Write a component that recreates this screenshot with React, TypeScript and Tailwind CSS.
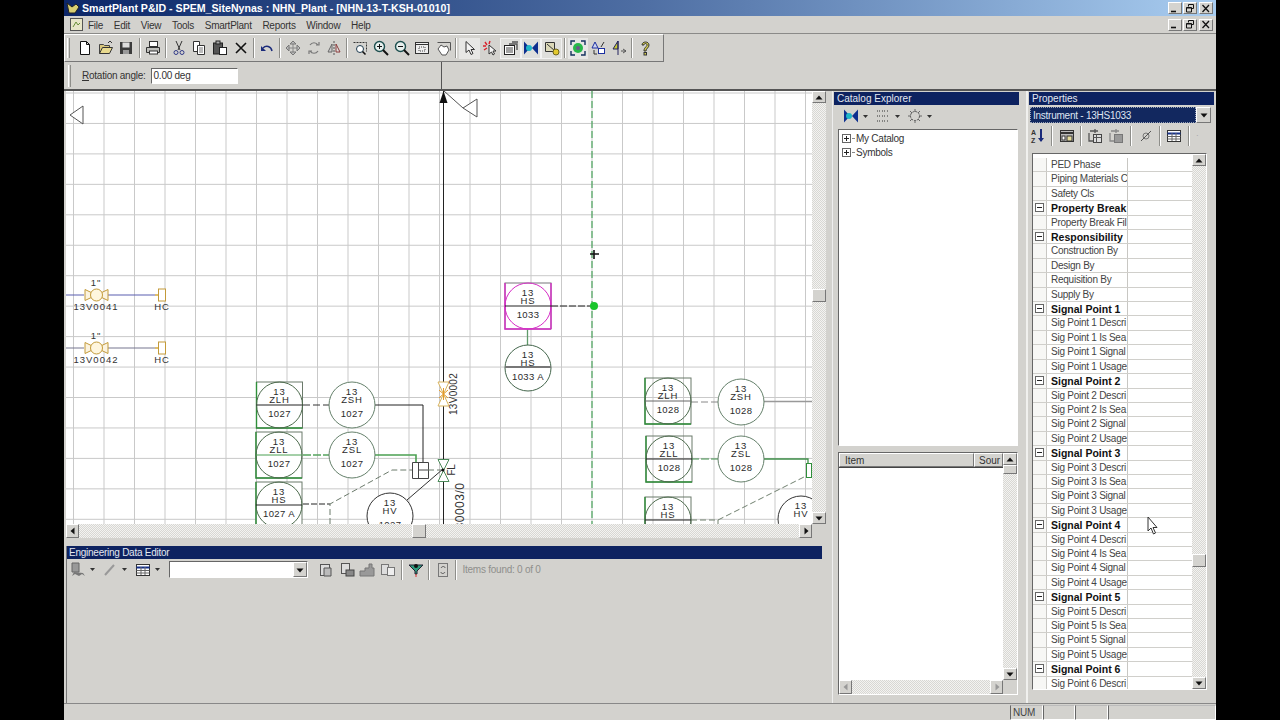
import type { ReactNode } from 'react';

const raised = 'border border-t-white border-l-white border-r-[#777] border-b-[#777] bg-[#d4d3cf]';
const sunken = 'border border-t-[#666] border-l-[#666] border-r-white border-b-white';
const track = 'bg-[repeating-conic-gradient(#d8d7d3_0_25%,#f3f3f1_0_50%)] bg-[length:2px_2px]';

const Ico = ({ children, w = 16 }: { children: ReactNode; w?: number }) => (
  <svg width={w} height="16" viewBox={`0 0 ${w} 16`} fill="none" strokeWidth="1">
    {children}
  </svg>
);

const icons: Record<string, ReactNode> = {
  newDoc: <path d="M3.5 1.5h6l3 3v10h-9z M9.5 1.5v3h3" stroke="#111" fill="#fff" />,
  open: <><path d="M1.5 13.5v-9h4l1 1h5v2" stroke="#444" fill="#d9c77c" /><path d="M1.5 13.5l3-6h10l-3 6z" stroke="#333" fill="#e8d98e" /><path d="M10 3l2-2 2 2" stroke="#333" /></>,
  save: <><rect x="2" y="2" width="12" height="12" fill="#3c3c3c" /><rect x="4.5" y="2.5" width="7" height="5" fill="#ddd" /><rect x="5" y="10" width="6" height="4" fill="#999" /></>,
  print: <><rect x="4.5" y="1.5" width="8" height="5" fill="#fff" stroke="#333" /><path d="M1.5 7.5h13v5h-13z" fill="#c0c0bc" stroke="#333" /><rect x="4.5" y="11" width="8" height="3" fill="#fff" stroke="#333" /></>,
  cut: <><path d="M5 1l4 9M11 1l-4 9" stroke="#333" /><circle cx="5" cy="12.5" r="2" stroke="#313a88" /><circle cx="11" cy="12.5" r="2" stroke="#313a88" /></>,
  copy: <><path d="M2.5 1.5h6v10h-6z" fill="#fff" stroke="#333" /><path d="M6.5 5.5h7v9h-7z" fill="#fff" stroke="#333" /><path d="M8 8h4M8 10h4M8 12h4" stroke="#777" /></>,
  paste: <><rect x="1.5" y="3" width="9" height="11" fill="#555" stroke="#222" /><rect x="4" y="1" width="4" height="3" fill="#aaa" stroke="#222" /><rect x="7.5" y="7.5" width="7" height="7" fill="#fff" stroke="#222" /></>,
  del: <path d="M3 3l10 10M13 3L3 13" stroke="#111" strokeWidth="1.6" />,
  undo: <><path d="M4 8c3-3 8-2 9 3" stroke="#1a2a7a" strokeWidth="1.5" /><path d="M2 6v5h5z" fill="#1a2a7a" /></>,
  move: <><path d="M8 1v14M1 8h14" stroke="#888" /><path d="M8 1l-3 3h6zM8 15l-3-3h6zM1 8l3-3v6zM15 8l-3-3v6z" fill="#bbb" stroke="#777" /></>,
  rotate: <path d="M4 5c2-3 6-3 8 0M12 11c-2 3-6 3-8 0M10 5h3V2M6 11H3v3" stroke="#777" strokeWidth="1.2" />,
  mirror: <><path d="M8 1v14" stroke="#555" strokeDasharray="2 1" /><path d="M6 4v8l-4 0z" stroke="#666" fill="#ccc" /><path d="M10 4v8l4 0z" stroke="#8a3a3a" fill="#ddd" /></>,
  zoomArea: <><path d="M1.5 2.5h13v9" stroke="#333" strokeDasharray="2 1" /><circle cx="8" cy="9" r="3.5" fill="#fff" stroke="#1d3b4f" /><path d="M10.5 11.5l3 3" stroke="#111" strokeWidth="1.6" /></>,
  zoomIn: <><circle cx="6.5" cy="6.5" r="5" fill="#e8f0ee" stroke="#1d4f4f" strokeWidth="1.4" /><path d="M4 6.5h5M6.5 4v5" stroke="#111" /><path d="M10 10l5 5" stroke="#111" strokeWidth="2" /></>,
  zoomOut: <><circle cx="6.5" cy="6.5" r="5" fill="#e8f0ee" stroke="#1d4f4f" strokeWidth="1.4" /><path d="M4 6.5h5" stroke="#111" /><path d="M10 10l5 5" stroke="#111" strokeWidth="2" /></>,
  fit: <><rect x="1.5" y="2.5" width="13" height="11" fill="#eee" stroke="#333" /><path d="M1.5 4.5h13" stroke="#333" /><rect x="5" y="7" width="6" height="4" stroke="#444" strokeDasharray="1 1" /></>,
  pan: <><path d="M2.5 2.5h13v8" stroke="#555" /><path d="M3 9l3-4 3 2 3-1 2 4-3 5H7z" fill="#fff" stroke="#555" /></>,
  select: <path d="M5 1.5v11l3-2.5 2 4.5 2-1-2-4h3.5z" fill="#f4f4f4" stroke="#333" />,
  pick: <><path d="M3 2l2 3M8 1L7 4M1 6l3 0M2 10l3-2" stroke="#d8202a" strokeWidth="1.4" /><path d="M7 5v9l2.5-2 1.5 3 1.5-1-1.5-3H14z" fill="#f4f4f4" stroke="#333" /></>,
  props: <><rect x="1.5" y="5.5" width="10" height="9" fill="#fff" stroke="#222" /><path d="M3 8h7M3 10h7M3 12h7" stroke="#444" /><path d="M6 4h8v6M9 2h6" stroke="#555" strokeWidth="1.4" /></>,
  catalog: <><path d="M1 1.5l6 6.5-6 6.5z" fill="#0d2f8f" /><path d="M15 1.5L9 8l6 6.5z" fill="#0d2f8f" /><circle cx="6" cy="8" r="3" fill="#1fb6c8" /></>,
  stock: <><path d="M1.5 2.5h9v9h-9z" fill="#dcd9b8" stroke="#333" /><path d="M3 4l8 7" stroke="#333" /><circle cx="12" cy="12" r="3" fill="#e3c92e" stroke="#6d6420" /></>,
  green: <><circle cx="8" cy="8" r="5" fill="#26b84a" /><circle cx="8" cy="8" r="2" fill="#6d5a8a" /><path d="M1 5V1h4M11 1h4v4M15 11v4h-4M5 15H1v-4" stroke="#13325f" strokeWidth="1.4" /></>,
  shapes: <><path d="M4 2L1 8h6z" fill="#cfd6f0" stroke="#1c2fa0" /><rect x="7.5" y="8.5" width="6" height="5" fill="#fff" stroke="#1c2fa0" /><path d="M3 10v4h3M10 7l3-5" stroke="#333" /></>,
  attr: <><path d="M7 1L2 9h5zM7 1v14" stroke="#23235f" fill="#c7c832" /><path d="M10 11h5M12 9l3 2-3 2" stroke="#555" /></>,
  help: <><path d="M5 5c0-4 7-4 7 0 0 3-3 3-3 6H7c0-4 3-4 3-6 0-2-3-2-3 0z" fill="#d7d14c" stroke="#333" /><rect x="7" y="12.5" width="2.5" height="2.5" fill="#d7d14c" stroke="#333" /></>,
  list: <path d="M2 3h3M7 3h3M12 3h2M2 8h3M7 8h3M12 8h2M2 13h3M7 13h3M12 13h2" stroke="#333" strokeDasharray="1 1" />,
  gear: <><circle cx="8" cy="8" r="4.5" stroke="#555" strokeDasharray="2 1" /><path d="M8 1v3M8 12v3M1 8h3M12 8h3M3 3l2 2M11 11l2 2M13 3l-2 2M5 11l-2 2" stroke="#666" /></>,
  az: <><text x="1" y="7" fontSize="7" fontWeight="700" fill="#333">A</text><text x="1" y="15" fontSize="7" fontWeight="700" fill="#333">Z</text><path d="M11 1v12" stroke="#1a2a7a" strokeWidth="2" /><path d="M8 10h6l-3 4z" fill="#1a2a7a" /></>,
  grid: <><rect x="1.5" y="2.5" width="13" height="11" fill="#fff" stroke="#333" /><path d="M1.5 5.5h13" stroke="#15308a" strokeWidth="2" /><path d="M1.5 8.5h13M1.5 11h13M6 5v8M10 5v8" stroke="#666" /></>,
  gridA: <><rect x="1.5" y="2.5" width="13" height="11" fill="#bbb" stroke="#333" /><path d="M1.5 5h13" stroke="#333" strokeWidth="2" /><rect x="8" y="8" width="5" height="5" fill="#e5dc9b" stroke="#333" /><rect x="3" y="8" width="3" height="4" fill="#fff" stroke="#333" /></>,
  gridB: <><rect x="6.5" y="6.5" width="8" height="8" fill="#ddd" stroke="#444" /><path d="M8 1v4M3 3h8M2 5v8h4" stroke="#555" strokeWidth="1.3" /><path d="M6.5 9.5h8M9.5 6.5v8" stroke="#555" /></>,
  gridC: <><rect x="6.5" y="6.5" width="8" height="8" fill="#999" stroke="#777" /><path d="M8 1v4M3 3h8M2 5v8h4" stroke="#888" strokeWidth="1.3" /></>,
  link: <><circle cx="8" cy="8" r="3" stroke="#777" /><path d="M3 13L13 3" stroke="#555" /></>,
  doc1: <><rect x="2.5" y="2.5" width="9" height="11" fill="#ddd" stroke="#555" /><path d="M6 6h7v8H6z" fill="#bbb" stroke="#555" /></>,
  doc2: <><rect x="2.5" y="1.5" width="8" height="10" fill="#ddd" stroke="#555" /><rect x="7" y="8" width="8" height="6" fill="#888" stroke="#444" /></>,
  doc3: <><path d="M1 9h5V6h4V2h3v4h2v8H1z" fill="#999" stroke="#777" /></>,
  doc4: <><rect x="1.5" y="2.5" width="7" height="10" fill="#ddd" stroke="#777" /><rect x="7.5" y="5.5" width="7" height="8" fill="#eee" stroke="#777" /></>,
  funnel: <><path d="M1 3h14L9 9v3H7V9z" fill="#2e9c7e" stroke="#223" /><circle cx="8" cy="4" r="2" fill="#111" /><path d="M8 12v3" stroke="#d33" /></>,
  refresh: <><rect x="3.5" y="1.5" width="9" height="13" stroke="#777" /><path d="M6 6c1-2 4-2 4 0M10 10c-1 2-4 2-4 0" stroke="#555" /></>,
  stack: <><path d="M2 1h7v9H2z" fill="#999" stroke="#666" /><path d="M4 10l-2 4 3-2 4 2 3-2 3 2-2-3z" fill="#777" /></>,
  pencil: <path d="M3 13L12 3" stroke="#999" strokeWidth="2" />,
};

const Sep = ({ w = 5.6 }: { w?: number }) => (
  <div className="flex h-[20px] justify-center" style={{ width: w }}>
    <div className="w-[2px] shrink-0 border-l border-l-[#8e8e8a] border-r border-r-white" />
  </div>
);

const Btn = ({ name, state }: { name: string; state?: 'on' | 'pressed' }) => (
  <div
    className={`flex h-[21px] w-[20.6px] items-center justify-center ${
      state === 'on' ? 'bg-[#e7e7e5]' : state === 'pressed' ? 'bg-[#dfdfdc] border border-[#f2f2f2]' : ''
    }`}
  >
    <Ico>{icons[name]}</Ico>
  </div>
);

const Arrow = ({ dir, light }: { dir: 'u' | 'd' | 'l' | 'r'; light?: boolean }) => {
  const d = { u: 'M4 2.5L7.5 6.5H.5z', d: 'M.5 2.5h7L4 6.5z', l: 'M5.5 .5v7L1.5 4z', r: 'M2.5 .5v7L6.5 4z' }[dir];
  return (
    <svg width="8" height="8" viewBox="0 0 8 8">
      <path d={d} fill={light ? '#999' : '#111'} />
    </svg>
  );
};

const DropTick = () => (
  <svg width="7" height="5" viewBox="0 0 7 5" className="mx-[3px]">
    <path d="M1 1h5L3.500 4z" fill="#333" />
  </svg>
);

const WinBtn = ({ kind }: { kind: 'min' | 'max' | 'close' }) => (
  <div className={`flex h-[12px] w-[14px] items-center justify-center ${raised}`}>
    <svg width="10" height="9" viewBox="0 0 10 9" fill="none" stroke="#111">
      {kind === 'min' && <path d="M1 7.500h5" strokeWidth="1.6" />}
      {kind === 'max' && <path d="M3.500 2.500v-2h5v4h-2M1.500 3.500h5v4.500h-5z M1.500 4h5" />}
      {kind === 'close' && <path d="M1.500 1l6.500 7M8 1L1.500 8" strokeWidth="1.3" />}
    </svg>
  </div>
);

function Instrument({ cx, cy, t, m, b, box, color = '#4c6a4c', bar = '#222', barW = 1, clear }: {
  cx: number; cy: number; t: string; m: string; b: string; box?: 'green' | 'gray' | 'magenta'; color?: string; bar?: string; barW?: number; clear?: boolean;
}) {
  const c = box === 'magenta' ? '#d62bc6' : '#2f8f3a';
  return (
    <g>
      {box && (
        <>
          <rect x={cx - 23} y={cy - 23} width="46" height="46" fill={clear ? 'none' : '#fff'} stroke={box === 'magenta' ? '#77777a' : '#6b7a6b'} />
          <path d={`M${cx - 23} ${cy - 23}V${cy + 23}H${cx + 23}`} stroke={c} fill="none" strokeWidth="1.4" />
          {box === 'magenta' && <path d={`M${cx + 23} ${cy - 23}V${cy + 23}`} stroke={c} strokeWidth="1.4" />}
        </>
      )}
      <circle cx={cx} cy={cy} r="23" fill={box ? 'none' : '#fff'} stroke={color} />
      {box && <path d={`M${cx - 23} ${cy}h46`} stroke={bar} strokeWidth={barW} />}
      <g fontSize="9.500" fill="#2b2b2b" textAnchor="middle" letterSpacing=".9" fontFamily="'Liberation Sans', sans-serif">
        <text x={cx} y={cy - 10.500}>{t}</text>
        <text x={cx} y={cy - 2}>{m}</text>
        <text x={cx} y={cy + 11.500} letterSpacing=".4">{b}</text>
      </g>
    </g>
  );
}

const LeftValve = ({ y, tag, line }: { y: number; tag: string; line: string }) => (
  <g>
    <path d={`M66 ${y}h18M108 ${y}h47`} stroke={line} strokeWidth="1.2" />
    <path d={`M85 ${y - 5.500}l23 11v-11l-23 11z`} fill="#fbf3df" stroke="#c39a39" />
    <circle cx="96.500" cy={y} r="6" fill="#fff6de" stroke="#c39a39" />
    <path d={`M155 ${y}h3`} stroke="#d3a93f" strokeWidth="1.500" />
    <rect x="158.500" y={y - 6} width="7" height="12" fill="#fff" stroke="#c39a39" />
    <g fontSize="9.500" fill="#333" textAnchor="middle" letterSpacing="1" fontFamily="'Liberation Sans', sans-serif">
      <text x="96" y={y - 9}>1"</text>
      <text x="96" y={y + 15}>{tag}</text>
      <text x="162" y={y + 15}>HC</text>
    </g>
  </g>
);

function Drawing() {
  const vx = Array.from({ length: 25 }, (_, i) => 73.5 + i * 30.5);
  const hy = Array.from({ length: 15 }, (_, i) => 92 + i * 30.45);
  return (
    <svg width="746" height="433" viewBox="66 90 746 433" className="block bg-white">
      {vx.map((x) => <path key={x} d={`M${x} 90V523`} stroke="#c9c9c9" />)}
      {hy.map((y) => <path key={y} d={`M66 ${y}H812`} stroke="#c9c9c9" />)}

      <path d="M83 105v18l-13-9z" fill="#fff" stroke="#555" />
      <path d="M444 90l19 17M477 98v18l-14-9z" fill="#fff" stroke="#555" />
      <path d="M592 90V523" stroke="#2e9a44" strokeDasharray="7 3" />
      <path d="M443.500 90V523" stroke="#222" />
      <path d="M443.500 90l-4 12h8z" fill="#111" />

      <LeftValve y={294} tag="13V0041" line="#5a5fb0" />
      <LeftValve y={347} tag="13V0042" line="#77778f" />

      <path d="M527.500 328v16" stroke="#5f9a6a" strokeWidth="1.300" />
      <Instrument cx={528} cy={305} t="13" m="HS" b="1033" box="magenta" color="#d62bc6" />
      <Instrument cx={528} cy={367} t="13" m="HS" b="1033  A" color="#44664c" />
      <path d="M505 366h46" stroke="#777" strokeWidth="2" />
      <path d="M551 305h42" stroke="#222" strokeDasharray="7 2" />
      <circle cx="594" cy="305" r="4" fill="#19c52b" />
      <path d="M594 249v9M590 253h9" stroke="#111" strokeWidth="1.600" />

      <path d="M303 404h27" stroke="#333" strokeDasharray="7 3" />
      <path d="M375 404h48v57" stroke="#222" fill="none" />
      <path d="M303 454h27" stroke="#55a45e" strokeDasharray="8 2" strokeWidth="1.300" />
      <path d="M375 454h41v7" stroke="#4ba052" strokeWidth="1.600" fill="none" />
      <path d="M412.500 461.500h16v16h-16zM418.500 461.500v16M418.500 469h10" stroke="#444" fill="#fff" />
      <path d="M303 503h27" stroke="#222" strokeDasharray="6 2" />
      <path d="M330 523V503l62-34h20M428 469h15" stroke="#6b7a6b" strokeDasharray="6 3" fill="none" />
      <path d="M407 499l36-31" stroke="#333" />

      <Instrument cx={279.500} cy={404} t="13" m="ZLH" b="1027" box="green" />
      <Instrument cx={352} cy={404} t="13" m="ZSH" b="1027" color="#64806a" />
      <Instrument cx={279} cy={454} t="13" m="ZLL" b="1027" box="green" bar="#4ba052" />
      <Instrument cx={352} cy={454} t="13" m="ZSL" b="1027" color="#64806a" />
      <Instrument cx={279} cy={504} t="13" m="HS" b="1027  A" box="green" />
      <Instrument cx={390} cy={515} t="13" m="HV" b="1027" color="#333" />

      <path d="M438 381h11l-11 24h11z" fill="#fff" stroke="#d9b45f" />
      <path d="M439 389l9 8M448 389l-9 8M443.500 387v12" stroke="#e49a2a" />
      <path d="M438 458.500h11l-11 22h11z" fill="#fff" stroke="#4c8a5a" />
      <circle cx="443" cy="469" r="1.500" fill="#111" />
      <g fill="#333" fontFamily="'Liberation Sans', sans-serif" textAnchor="middle">
        <text transform="translate(457 393) rotate(-90)" fontSize="10" letterSpacing=".3">13V0002</text>
        <text transform="translate(455 469) rotate(-90)" fontSize="10">FL</text>
        <text transform="translate(464 505) rotate(-90)" fontSize="12" letterSpacing=".5">30003/0</text>
      </g>

      <path d="M691 401h27" stroke="#888" strokeDasharray="7 3" />
      <path d="M764 400.500h48" stroke="#999" strokeWidth="1.500" />
      <path d="M691 458h27" stroke="#3f8f4a" strokeDasharray="8 2" />
      <path d="M764 458h44v5" stroke="#3f8f4a" strokeWidth="1.300" fill="none" />
      <rect x="806.500" y="462.500" width="5" height="14" fill="#fff" stroke="#2f8f3a" />
      <path d="M691 519h27v4M718 519l88-44" stroke="#70806f" strokeDasharray="6 3" fill="none" />

      <Instrument cx={668} cy={400} t="13" m="ZLH" b="1028" box="green" bar="#666" clear />
      <Instrument cx={741} cy={401} t="13" m="ZSH" b="1028" color="#64806a" />
      <Instrument cx={669} cy={458} t="13" m="ZLL" b="1028" box="green" clear />
      <Instrument cx={741} cy={458} t="13" m="ZSL" b="1028" color="#64806a" />
      <Instrument cx={668} cy={519} t="13" m="HS" b="1028" box="green" clear />
      <Instrument cx={801} cy={518} t="13" m="HV" b="1028" color="#333" />
    </svg>
  );
}

const VScroll = ({ top, thumb = 13 }: { top: number; thumb?: number }) => (
  <div className={`flex h-full w-[14px] flex-col ${track}`}>
    <div className={`flex h-[12px] items-center justify-center ${raised}`}><Arrow dir="u" /></div>
    <div className="min-h-0 flex-1">
      <div className={raised} style={{ marginTop: top, height: thumb }} />
    </div>
    <div className={`flex h-[12px] items-center justify-center ${raised}`}><Arrow dir="d" /></div>
  </div>
);

const HScroll = ({ left, light }: { left?: number; light?: boolean }) => (
  <div className={`flex h-full min-w-0 flex-1 ${track}`}>
    <div className={`flex w-[13px] items-center justify-center ${raised}`}><Arrow dir="l" light={light} /></div>
    <div className="min-w-0 flex-1">
      {left !== undefined && <div className={`h-full w-[14px] ${raised}`} style={{ marginLeft: left }} />}
    </div>
    <div className={`flex w-[13px] items-center justify-center ${raised}`}><Arrow dir="r" light={light} /></div>
  </div>
);

type Row = { n: string; h?: boolean };
const signal = (i: number): Row[] => [
  { n: `Signal Point ${i}`, h: true },
  { n: `Sig Point ${i} Descri` },
  { n: `Sig Point ${i} Is Sea` },
  { n: `Sig Point ${i} Signal` },
  { n: `Sig Point ${i} Usage` },
];
const rows: Row[] = [
  { n: 'PED Phase' },
  { n: 'Piping Materials C' },
  { n: 'Safety Cls' },
  { n: 'Property Break', h: true },
  { n: 'Property Break Fil' },
  { n: 'Responsibility', h: true },
  { n: 'Construction By' },
  { n: 'Design By' },
  { n: 'Requisition By' },
  { n: 'Supply By' },
  ...signal(1),
  ...signal(2),
  ...signal(3),
  ...signal(4),
  ...signal(5),
  { n: 'Signal Point 6', h: true },
  { n: 'Sig Point 6 Descri' },
];

const PanelTitle = ({ children }: { children: ReactNode }) => (
  <div className="flex h-[13px] shrink-0 items-center bg-[#0d2260] pl-[3px] text-[10px] leading-none tracking-normal text-[#e4e8f0]">{children}</div>
);

const Expander = () => (
  <div className="flex h-[9px] w-[9px] items-center justify-center border border-[#666] bg-white">
    <div className="h-px w-[5px] bg-[#222]" />
  </div>
);

const TreeNode = ({ label }: { label: string }) => (
  <div className="flex h-[14px] items-center pl-[3px]">
    <svg width="9" height="9" viewBox="0 0 9 9" fill="none" stroke="#666">
      <rect x=".5" y=".5" width="8" height="8" fill="#fff" />
      <path d="M2 4.500h5M4.500 2v5" stroke="#222" />
    </svg>
    <span className="ml-[1px] mr-[1px] h-px w-[3px] bg-[#888]" />
    <span className="text-[#333]">{label}</span>
  </div>
);

export default function App() {
  return (
    <div className="flex h-[720px] w-[1280px] justify-center overflow-hidden bg-black font-['Liberation_Sans',Arial,sans-serif] text-[10px] tracking-[-0.25px] text-[#222]">
      <div className="relative flex h-full w-[1152px] flex-col bg-[#d3d2ce]">
        {/* title bar */}
        <div className="flex h-[16px] shrink-0 items-center bg-gradient-to-r from-[#0c2668] via-[#4e6ea3] to-[#a9cdf0] pl-[2px] pr-[3px]">
          <svg width="15" height="14" viewBox="0 0 15 14" fill="none">
            <path d="M1 2l5 4 4-3 3 3-4 6H3z" fill="#d9cf73" stroke="#222" />
          </svg>
          <span className="ml-[1px] whitespace-nowrap text-[10.6px] font-bold leading-none tracking-normal text-white">
            SmartPlant P&amp;ID - SPEM_SiteNynas : NHN_Plant - [NHN-13-T-KSH-01010]
          </span>
          <div className="ml-auto flex items-center gap-[1px]">
            <WinBtn kind="min" />
            <WinBtn kind="max" />
            <div className="ml-[1px]"><WinBtn kind="close" /></div>
          </div>
        </div>

        {/* menu bar */}
        <div className="flex h-[18px] shrink-0 items-center border-b border-b-[#8a8a88] pl-[6px] pr-[3px] text-[#333]">
          <svg width="13" height="13" viewBox="0 0 13 13" fill="none" className="mr-[4px]">
            <rect x=".5" y=".5" width="12" height="12" fill="#e8e6c8" stroke="#555" />
            <path d="M3 9l3-5 2 3 2-2" stroke="#6b8f3a" />
          </svg>
          <div className="flex gap-[10.7px] whitespace-nowrap pl-[1px] pt-[1px]">
            {['File', 'Edit', 'View', 'Tools', 'SmartPlant', 'Reports', 'Window', 'Help'].map((m) => (
              <span key={m}>{m}</span>
            ))}
          </div>
          <div className="ml-auto flex items-center gap-[1px]">
            <WinBtn kind="min" />
            <WinBtn kind="max" />
            <div className="ml-[1px]"><WinBtn kind="close" /></div>
          </div>
        </div>

        {/* main toolbar */}
        <div className="flex h-[28px] shrink-0">
          <div className={`flex w-[600px] items-center ${raised} border-t-white bg-[#d3d2ce] pl-[2px]`}>
            <div className="mr-[5px] h-[20px] w-[3px] border-l border-l-white border-r border-r-[#8e8e8a]" />
            <Btn name="newDoc" /><Btn name="open" /><Btn name="save" />
            <Sep />
            <Btn name="print" />
            <Sep />
            <Btn name="cut" /><Btn name="copy" /><Btn name="paste" /><Btn name="del" />
            <Sep />
            <Btn name="undo" />
            <Sep />
            <Btn name="move" /><Btn name="rotate" /><Btn name="mirror" />
            <Sep />
            <Btn name="zoomArea" /><Btn name="zoomIn" /><Btn name="zoomOut" /><Btn name="fit" /><Btn name="pan" />
            <Sep w={6} />
            <Btn name="select" state="on" /><Btn name="pick" /><Btn name="props" state="pressed" /><Btn name="catalog" state="pressed" /><Btn name="stock" state="pressed" />
            <Sep />
            <Btn name="green" state="on" /><Btn name="shapes" /><Btn name="attr" />
            <Sep />
            <Btn name="help" />
          </div>
        </div>

        {/* rotation ribbon */}
        <div className="flex h-[27px] shrink-0">
          <div className="flex h-full w-[378px] items-center border-r border-r-[#555] pl-[4px]">
            <div className="h-[22px] w-[3px] border-l border-l-white border-r border-r-[#8e8e8a]" />
            <span className="ml-[11px] whitespace-nowrap text-[#333]"><u>R</u>otation angle:</span>
            <div className={`ml-[5px] flex h-[16px] w-[87px] items-center bg-white pl-[2px] text-[#333] ${sunken}`}>0.00 deg</div>
          </div>
        </div>

        {/* work area */}
        <div className="flex min-h-0 flex-1 border-t-2 border-t-[#555]">
          <div className="flex w-[762px] shrink-0 flex-col pl-[2px]">
            <div className="flex h-[433px] shrink-0">
              <Drawing />
              <VScroll top={186} />
            </div>
            <div className="flex h-[14px] shrink-0">
              <HScroll left={333} />
              <div className="w-[14px] bg-[#d3d2ce]" />
            </div>
            <div className="mt-[8px] flex min-h-0 flex-1 flex-col border-l border-l-[#777]">
              <div className="mr-[4px] flex h-[13px] shrink-0 items-center bg-[#0d2260] pl-[2px] leading-none text-[#e4e8f0]">Engineering Data Editor</div>
              <div className="flex h-[21px] items-center pl-[3px] text-[#8a8a88]">
                <Ico>{icons.stack}</Ico><DropTick />
                <div className="ml-[3px]"><Ico>{icons.pencil}</Ico></div><DropTick />
                <div className="ml-[4px]"><Ico>{icons.grid}</Ico></div><DropTick />
                <div className={`ml-[5px] flex h-[17px] w-[139px] justify-end bg-white ${sunken}`}>
                  <div className={`flex w-[14px] items-center justify-center ${raised}`}><Arrow dir="d" /></div>
                </div>
                <div className="ml-[10px] flex gap-[4.5px]">
                  <Ico>{icons.doc1}</Ico><Ico>{icons.doc2}</Ico><Ico>{icons.doc3}</Ico><Ico>{icons.doc4}</Ico>
                </div>
                <Sep w={12} />
                <Ico>{icons.funnel}</Ico>
                <Sep w={11} />
                <Ico>{icons.refresh}</Ico>
                <Sep w={11} />
                <span className="ml-[1px] whitespace-nowrap text-[#8f8f8c]">Items found: 0 of 0</span>
              </div>
            </div>
          </div>

          <div className="ml-[6px] flex h-full w-[189px] shrink-0 flex-col border-l border-l-[#eee] pb-[8px] pl-[1px] pr-[2px] pt-[1px]">
            <PanelTitle>Catalog Explorer</PanelTitle>
            <div className="flex h-[24px] shrink-0 items-center pb-[2px] pl-[9px]">
              <Ico>{icons.catalog}</Ico><DropTick />
              <div className="ml-[3px]"><Ico>{icons.list}</Ico></div><DropTick />
              <div className="ml-[3px]"><Ico>{icons.gear}</Ico></div><DropTick />
            </div>
            <div className={`ml-[4px] mr-[1px] h-[317px] shrink-0 bg-white pt-[1px] ${sunken}`}>
              <TreeNode label="My Catalog" />
              <TreeNode label="Symbols" />
            </div>
            <div className={`ml-[4px] mr-[1px] mt-[6px] flex min-h-0 flex-1 flex-col bg-white ${sunken}`}>
              <div className="flex min-h-0 flex-1">
                <div className="flex min-w-0 flex-1 flex-col">
                  <div className="flex h-[15px] shrink-0 border-b border-b-[#444] leading-[14px] tracking-normal text-[#333]">
                    <div className={`w-[135px] pl-[5px] ${raised}`}>Item</div>
                    <div className={`flex-1 overflow-hidden pl-[4px] ${raised}`}>Sour</div>
                  </div>
                </div>
                <VScroll top={0} thumb={9} />
              </div>
              <div className="flex h-[14px] shrink-0">
                <HScroll light />
                <div className="w-[14px] bg-[#d3d2ce]" />
              </div>
            </div>
          </div>

          <div className="ml-[5px] flex h-full min-w-0 flex-1 flex-col border-l-2 border-l-[#f0f0ee] pb-[10px] pl-[1px] pr-[2px] pt-[1px]">
            <PanelTitle>Properties</PanelTitle>
            <div className="mr-[3px] mt-[2px] flex h-[16px] shrink-0 items-stretch">
              <div className="ml-[1px] flex flex-1 items-center border border-dotted border-[#9aa3b8] bg-[#12285f] pl-[2px] text-[#dfe5f2]">Instrument - 13HS1033</div>
              <div className={`flex w-[15px] items-center justify-center ${raised}`}><Arrow dir="d" /></div>
            </div>
            <div className="flex h-[23px] shrink-0 items-center pl-[1px] pt-[3px]">
              <Ico w={15}>{icons.az}</Ico>
              <Sep w={14} />
              <Ico>{icons.gridA}</Ico>
              <Sep w={12} />
              <Ico>{icons.gridB}</Ico>
              <div className="ml-[5px]"><Ico>{icons.gridC}</Ico></div>
              <Sep w={14} />
              <Ico>{icons.link}</Ico>
              <Sep w={12} />
              <Ico>{icons.grid}</Ico>
              <Sep w={14} />
              <span className="text-[8px] text-[#999]">·</span>
            </div>
            <div className={`ml-[3px] mr-[7px] mt-[7px] flex h-[537px] shrink-0 overflow-hidden ${sunken}`}>
              <div className="min-w-0 flex-1 bg-white pt-[4px]">
                {rows.map((r) => (
                  <div key={r.n} className="flex h-[14.42px] border-b border-b-[#d0cfcb] leading-[14px]">
                    <div className="flex w-[14px] shrink-0 items-center justify-center border-r border-r-[#c8c7c3] bg-[#f7f7f5]">
                      {r.h && <Expander />}
                    </div>
                    <div className={`w-[81px] shrink-0 overflow-hidden whitespace-nowrap border-r border-r-[#c8c7c3] pl-[4px] ${r.h ? 'text-[10.5px] font-bold tracking-normal text-[#111]' : 'text-[#444]'}`}>
                      {r.n}
                    </div>
                    <div className="flex-1" />
                  </div>
                ))}
              </div>
              <VScroll top={388} />
            </div>
          </div>
        </div>

        {/* status bar */}
        <div className="flex h-[17px] shrink-0 justify-end border-t border-t-[#888] pt-[1px] leading-[14px] text-[#444]">
          <div className={`w-[33px] pl-[2px] ${sunken} border-t-[#bbb]`}>NUM</div>
          <div className={`w-[32px] ${sunken} border-t-[#bbb]`} />
          <div className={`w-[33px] ${sunken} border-t-[#bbb]`} />
          <div className={`w-[108px] ${sunken} border-t-[#bbb]`} />
        </div>

        {/* mouse pointer */}
        <svg width="11" height="19" viewBox="0 0 11 19" className="absolute left-[1083px] top-[516px]">
          <path d="M1 1v14l3-3 2.500 6 2-1-2.500-5.500h4z" fill="#fff" stroke="#333" />
        </svg>
      </div>
    </div>
  );
}
